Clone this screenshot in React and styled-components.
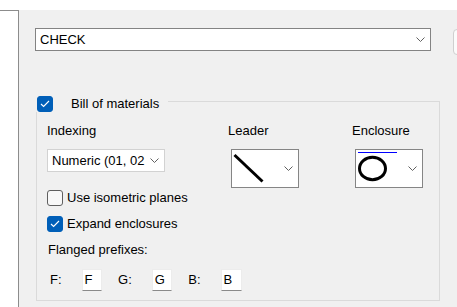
import React from "react";
import styled, { createGlobalStyle } from "styled-components";

const Global = createGlobalStyle`
  html, body { margin: 0; padding: 0; background: #ffffff; }
  body {
    font-family: "Liberation Sans", Arial, sans-serif;
    font-size: 13px;
    line-height: 16px;
    color: #000;
  }
  * { box-sizing: border-box; }
`;

const Window = styled.div`
  width: 457px;
  height: 307px;
  display: flex;
  flex-direction: column;
  overflow: hidden;
`;

const TopStrip = styled.div`
  height: 10px;
  flex-shrink: 0;
  background: #ffffff;
`;

const Main = styled.div`
  flex: 1;
  display: flex;
  min-height: 0;
`;

const SidePanel = styled.div`
  width: 19px;
  flex-shrink: 0;
  background: #ffffff;
  border-top: 1px solid #8c8c8c;
  border-right: 1px solid #8c8c8c;
`;

const Content = styled.div`
  flex: 1;
  min-width: 0;
  background: #f0f0f0;
  padding: 18px 0 0 16px;
  display: flex;
  flex-direction: column;
  overflow: hidden;
`;

const TopRow = styled.div`
  display: flex;
  align-items: flex-start;
  gap: 22px;
`;

const Combo = styled.div`
  flex-shrink: 0;
  width: ${(p) => p.$w}px;
  height: ${(p) => p.$h}px;
  margin-left: ${(p) => p.$ml || 0}px;
  display: flex;
  align-items: center;
  background: #ffffff;
  border: 1px solid ${(p) => p.$border || "#858585"};
  padding: 0 5px 0 ${(p) => (p.$pl === undefined ? 3 : p.$pl)}px;
  overflow: hidden;
`;

const ComboText = styled.span`
  flex: 1;
  min-width: 0;
  white-space: nowrap;
  overflow: hidden;
`;

const ChevronSvg = styled.svg`
  flex-shrink: 0;
  margin-left: auto;
  display: block;
`;

const Chevron = () => (
  <ChevronSvg width="9" height="5" viewBox="0 0 9 5">
    <polyline
      points="0.5,0.5 4.5,4.5 8.5,0.5"
      fill="none"
      stroke="#606060"
      strokeWidth="1"
    />
  </ChevronSvg>
);

const SideButton = styled.div`
  flex-shrink: 0;
  width: 40px;
  height: 26px;
  margin-top: 1px;
  background: #fbfbfb;
  border: 1px solid #cfcfcf;
  border-radius: 4px;
`;

const GroupBox = styled.div`
  margin-top: 41px;
  margin-left: 1px;
  width: 404px;
  display: flex;
  flex-direction: column;
`;

const GroupHeader = styled.div`
  height: 16px;
  display: flex;
  align-items: center;
  padding-left: 1px;
`;

const HeaderText = styled.span`
  margin-left: 18px;
  white-space: nowrap;
`;

const HeaderLine = styled.div`
  flex: 1;
  align-self: stretch;
  margin-top: 5px;
  margin-left: 9px;
  border-top: 1px solid #dadada;
  border-right: 1px solid #dadada;
`;

const GroupBody = styled.div`
  border: 1px solid #dadada;
  border-top: none;
  padding: 11px 0 9px 10px;
  display: flex;
  flex-direction: column;
`;

const Columns = styled.div`
  display: flex;
  align-items: flex-start;
`;

const Column = styled.div`
  width: ${(p) => (p.$w ? `${p.$w}px` : "auto")};
  flex-shrink: 0;
  display: flex;
  flex-direction: column;
  align-items: flex-start;
`;

const Label = styled.div`
  height: 16px;
  white-space: nowrap;
  margin-bottom: 10px;
`;

const Box = styled.span`
  width: 16px;
  height: 16px;
  flex-shrink: 0;
  border-radius: 3px;
  display: flex;
  align-items: center;
  justify-content: center;
  background: ${(p) => (p.$checked ? "#005fb8" : "#f8f8f8")};
  border: 1px solid ${(p) => (p.$checked ? "#005fb8" : "#5f5f5f")};
`;

const CheckBox = ({ checked }) => (
  <Box $checked={checked}>
    {checked && (
      <svg width="10" height="8" viewBox="0 0 10 8">
        <polyline
          points="1,4 3.6,6.5 9,1"
          fill="none"
          stroke="#ffffff"
          strokeWidth="1.1"
        />
      </svg>
    )}
  </Box>
);

const CheckRow = styled.div`
  display: flex;
  align-items: center;
  gap: 4px;
  height: 16px;
  margin-top: ${(p) => p.$mt}px;
  white-space: nowrap;
`;

const PlainText = styled.div`
  margin-top: ${(p) => p.$mt || 0}px;
  margin-left: ${(p) => p.$ml || 0}px;
  height: 16px;
  white-space: nowrap;
`;

const PrefixRow = styled.div`
  margin-top: 11px;
  padding-left: 3px;
  display: flex;
  align-items: center;
  gap: 16.5px;
`;

const PrefixItem = styled.div`
  display: flex;
  align-items: center;
`;

const PrefixLabel = styled.span`
  margin-right: 20px;
`;

const PrefixInput = styled.div`
  width: ${(p) => p.$w || 20}px;
  height: 22px;
  background: #ffffff;
  border: 1px solid #ececec;
  border-bottom-color: #8a8a8a;
  padding-left: 2px;
  display: flex;
  align-items: center;
`;

const IconSvg = styled.svg`
  display: block;
  flex-shrink: 0;
`;

const LeaderIcon = () => (
  <IconSvg width="34" height="37" viewBox="0 0 34 37">
    <line x1="2.5" y1="5" x2="30.5" y2="31.5" stroke="#000" strokeWidth="3" />
  </IconSvg>
);

const EnclosureIcon = () => (
  <IconSvg width="42" height="37" viewBox="0 0 42 37">
    <line x1="2" y1="2.5" x2="41" y2="2.5" stroke="#0000ff" strokeWidth="1" />
    <ellipse
      cx="16.5"
      cy="18.5"
      rx="13"
      ry="11.3"
      fill="none"
      stroke="#000"
      strokeWidth="3"
    />
  </IconSvg>
);

export default function App() {
  return (
    <>
      <Global />
      <Window>
        <TopStrip />
        <Main>
          <SidePanel />
          <Content>
            <TopRow>
              <Combo $w={396} $h={23} $border="#838383" $pl={4}>
                <ComboText>CHECK</ComboText>
                <Chevron />
              </Combo>
              <SideButton />
            </TopRow>

            <GroupBox>
              <GroupHeader>
                <CheckBox checked />
                <HeaderText>Bill of materials</HeaderText>
                <HeaderLine />
              </GroupHeader>
              <GroupBody>
                <Columns>
                  <Column $w={181}>
                    <Label>Indexing</Label>
                    <Combo $w={118} $h={23} $border="#d2d2d2" $pl={4}>
                      <ComboText>Numeric (01, 02</ComboText>
                      <Chevron />
                    </Combo>
                    <CheckRow $mt={18}>
                      <CheckBox />
                      <span>Use isometric planes</span>
                    </CheckRow>
                    <CheckRow $mt={10}>
                      <CheckBox checked />
                      <span>Expand enclosures</span>
                    </CheckRow>
                    <PlainText $mt={10} $ml={1}>
                      Flanged prefixes:
                    </PlainText>
                  </Column>
                  <Column $w={124}>
                    <Label>Leader</Label>
                    <Combo $w={68} $h={39} $ml={3} $border="#858585" $pl={0}>
                      <LeaderIcon />
                      <Chevron />
                    </Combo>
                  </Column>
                  <Column>
                    <Label>Enclosure</Label>
                    <Combo $w={68} $h={39} $ml={3} $border="#858585" $pl={0}>
                      <EnclosureIcon />
                      <Chevron />
                    </Combo>
                  </Column>
                </Columns>
                <PrefixRow>
                  <PrefixItem>
                    <PrefixLabel>F:</PrefixLabel>
                    <PrefixInput>F</PrefixInput>
                  </PrefixItem>
                  <PrefixItem>
                    <PrefixLabel>G:</PrefixLabel>
                    <PrefixInput>G</PrefixInput>
                  </PrefixItem>
                  <PrefixItem>
                    <PrefixLabel>B:</PrefixLabel>
                    <PrefixInput $w={21}>B</PrefixInput>
                  </PrefixItem>
                </PrefixRow>
              </GroupBody>
            </GroupBox>
          </Content>
        </Main>
      </Window>
    </>
  );
}
